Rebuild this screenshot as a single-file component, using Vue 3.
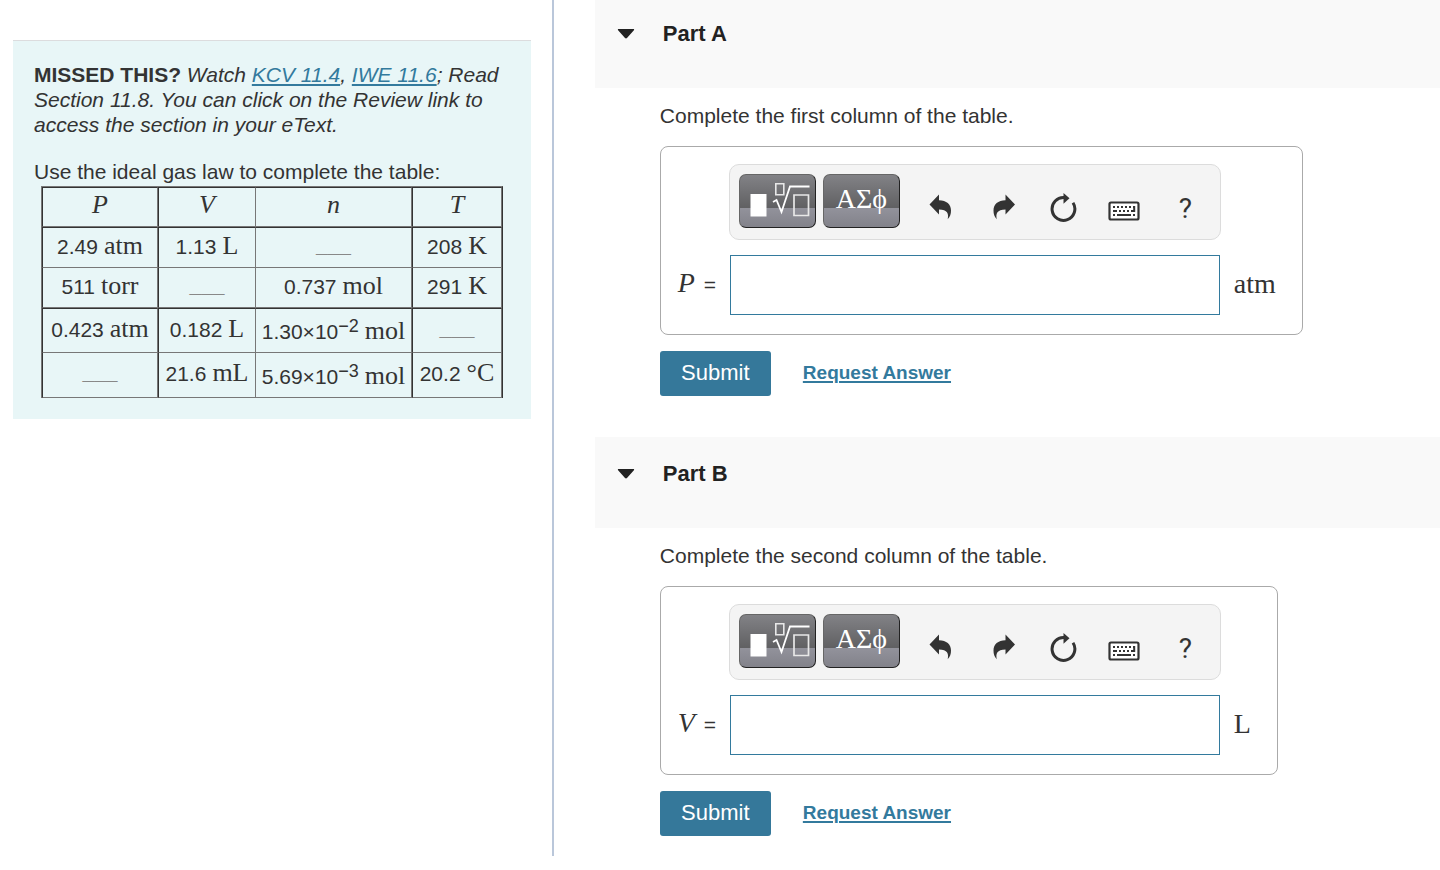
<script setup>
const parts = [
  { id: 'a', title: 'Part A', text: 'Complete the first column of the table.', symbol: 'P', unit: 'atm' },
  { id: 'b', title: 'Part B', text: 'Complete the second column of the table.', symbol: 'V', unit: 'L' },
]

const rows = [
  [{ n: '2.49', u: 'atm' }, { n: '1.13', u: 'L' }, null, { n: '208', u: 'K' }],
  [{ n: '511', u: 'torr' }, null, { n: '0.737', u: 'mol' }, { n: '291', u: 'K' }],
  [{ n: '0.423', u: 'atm' }, { n: '0.182', u: 'L' }, { n: '1.30×10', e: '−2', u: 'mol' }, null],
  [null, { n: '21.6', u: 'mL' }, { n: '5.69×10', e: '−3', u: 'mol' }, { n: '20.2', u: '°C' }],
]
</script>

<template>
  <div class="page">
    <aside class="side">
      <div class="problem">
        <p class="hint">
          <strong>MISSED THIS?</strong> <em>Watch <a href="#">KCV 11.4</a>, <a href="#">IWE 11.6</a>; Read Section 11.8. You can click on the Review link to access the section in your eText.</em>
        </p>
        <p class="task">Use the ideal gas law to complete the table:</p>
        <table class="gas">
          <colgroup>
            <col class="c-p" /><col class="c-v" /><col class="c-n" /><col class="c-t" />
          </colgroup>
          <thead>
            <tr>
              <th v-for="s in ['P', 'V', 'n', 'T']" :key="s" scope="col"><i class="math">{{ s }}</i></th>
            </tr>
          </thead>
          <tbody>
            <tr v-for="(row, r) in rows" :key="r">
              <td v-for="(c, i) in row" :key="i" :class="{ power: c && c.e, blank: !c }">
                <template v-if="c">{{ c.n }}<sup v-if="c.e">{{ c.e }}</sup><span class="math unit-gap">{{ c.u }}</span></template>
                <template v-else>___</template>
              </td>
            </tr>
          </tbody>
        </table>
      </div>
    </aside>

    <main class="main">
      <section v-for="p in parts" :key="p.id" class="part">
        <header class="part-header">
          <button class="toggle" type="button" :aria-label="'Collapse ' + p.title">
            <svg width="18" height="10" viewBox="0 0 18 10"><path d="M1.6 0h14.8c.8 0 1 .7.5 1.200L10 9c-.6.6-1.400.6-2 0L1.100 1.200C.6.7.8 0 1.600 0z" fill="#222" /></svg>
          </button>
          <h2>{{ p.title }}</h2>
        </header>
        <div class="body">
          <p class="instruction">{{ p.text }}</p>
          <div class="answer">
            <div class="toolbar" role="toolbar">
              <button class="palette" type="button" aria-label="Templates">
                <svg width="75" height="52" viewBox="0 0 75 52" fill="none" stroke="#fff">
                  <path d="M10.500 19h16v22.500h-16z" fill="#fff" stroke="none" />
                  <path d="M35.800 8.800h8v11h-8z" stroke-width="1.600" stroke="#e8e8e8" />
                  <path d="M33 27l3.500-2 5 12 8.500-25.500h19.500" stroke-width="1.800" />
                  <path d="M54 20h14.500v20.500H54z" stroke-width="1.700" stroke="#e8e8e8" />
                </svg>
              </button>
              <button class="palette greek" type="button" aria-label="Symbols">ΑΣϕ</button>
              <div class="tools">
                <button class="tool" type="button" aria-label="Undo">
                  <svg width="24" height="30" viewBox="0 0 24 30"><path d="M.5 11.500L10 1.500v5.700C17.500 7.500 22 11 22 17.500c0 3.500-.8 6-3.300 8.800 1.200-6-.2-9.700-8.700-9.900v5.100z" fill="#333" /></svg>
                </button>
                <button class="tool" type="button" aria-label="Redo">
                  <svg width="28" height="30" viewBox="0 0 28 30"><path d="M27 11.500L17.500 1.500v5.700C10 7.500 5.500 11 5.500 17.500c0 3.500.8 6 3.300 8.800-1.200-6 .2-9.700 8.700-9.900v5.100z" fill="#333" /></svg>
                </button>
                <button class="tool" type="button" aria-label="Reset">
                  <svg width="28" height="30" viewBox="0 0 28 30"><path d="M15.500 4.600A11.400 11.400 0 1 0 24 9.700" fill="none" stroke="#333" stroke-width="3" /><path d="M14.500 0L20.500 5.200 14.500 10.800z" fill="#333" /></svg>
                </button>
                <button class="tool" type="button" aria-label="Keyboard shortcuts">
                  <svg class="keys" width="32" height="20" viewBox="0 0 32 20">
                    <rect x="1.500" y="1.500" width="29" height="17" rx="1.500" fill="#fff" stroke="#333" stroke-width="2.200" />
                    <path d="M5 6h2M9 6h2M13 6h2M17 6h2M21 6h2M25 6h2M5 10h4M11 10h2M15 10h2M19 10h2M23 10h4M26.200 5v6M5 14h2M9 14h14M25 14h2" stroke="#333" stroke-width="2" />
                  </svg>
                </button>
                <button class="tool help" type="button" aria-label="Help">?</button>
              </div>
            </div>
            <label class="symbol" :for="'answer-' + p.id"><i class="math">{{ p.symbol }}</i> =</label>
            <input :id="'answer-' + p.id" class="field" type="text" />
            <span class="math unit">{{ p.unit }}</span>
          </div>
          <div class="actions">
            <button class="submit" type="button">Submit</button>
            <a class="request" href="#">Request Answer</a>
          </div>
        </div>
      </section>
    </main>
  </div>
</template>

<style>
body {
  margin: 0;
  background: #fff;
}
</style>

<style scoped>
.page {
  display: grid;
  grid-template-columns: 5fr 8fr;
  font-family: "Liberation Sans", Arial, sans-serif;
  font-size: 21px;
  line-height: 26px;
  color: #333;
}
p, h2 {
  margin: 0;
}
button {
  font-family: inherit;
  cursor: pointer;
}
a {
  color: #337a9d;
  text-decoration-thickness: 2px;
  text-underline-offset: 2px;
}
.math {
  font-family: "Liberation Serif", "Times New Roman", serif;
}
.side {
  border-right: 2px solid #bac7da;
  padding: 40px 21px 0 13px;
}
.problem {
  background: #e8f6f7;
  border-top: 1px solid #dcdcde;
  padding: 21px;
}
.hint {
  line-height: 25px;
  margin-bottom: 22px;
}
.gas {
  margin-left: 7px;
  margin-top: 1px;
  width: 462px;
  table-layout: fixed;
  border-collapse: separate;
  border-spacing: 0;
  border-style: solid;
  border-width: 1px 1px 0;
  border-color: #777 #333 #777 #777;
}
.c-p { width: 116px; }
.c-v { width: 98px; }
.c-n { width: 156px; }
.c-t { width: 90px; }
.gas th,
.gas td {
  box-sizing: border-box;
  height: 40px;
  padding: 0 0 3px;
  border: 0 solid #333;
  border-right: 1px solid #777;
  border-bottom: 1px solid #777;
  text-align: center;
  vertical-align: middle;
  font-weight: 400;
  line-height: 24px;
  white-space: nowrap;
}
.gas th {
  border-top-width: 1px;
}
.gas th:not(:nth-child(3)),
.gas td:not(:nth-child(3)) {
  border-left-width: 1px;
}
.gas tbody tr:nth-child(odd) td {
  border-top-width: 1px;
}
.gas tbody tr:first-child td {
  height: 41px;
}
.gas tbody tr:nth-child(n + 3) td {
  height: 45px;
}
.gas tbody td.power {
  padding: 2px 0 0;
}
.gas tbody td.blank {
  padding-bottom: 6px;
  color: #888;
  font-weight: 700;
}
.gas .math {
  font-size: 26px;
}
.unit-gap {
  margin-left: 6px;
}
sup {
  font-size: 18px;
  line-height: 0;
  vertical-align: 7px;
}
.part-header {
  box-sizing: border-box;
  height: 91px;
  padding: 24px 22px;
  display: flex;
  align-items: flex-start;
  gap: 28px;
  background: #f9f9f9;
}
.part:first-child .part-header {
  height: 88px;
  padding-top: 21px;
}
.toggle {
  display: flex;
  align-items: center;
  height: 26px;
  padding: 0;
  border: 0;
  background: none;
}
h2 {
  font-size: 22px;
  color: #222;
}
.main {
  padding-left: 41px;
}
.body {
  padding: 15px 20px 41px 65px;
}
.part:last-child .body {
  padding-bottom: 20px;
}
.answer {
  box-sizing: border-box;
  width: fit-content;
  margin-top: 17px;
  padding: 17px 26px 19px 17px;
  border: 1px solid #aaa;
  border-radius: 8px;
  display: grid;
  grid-template-columns: 51px auto auto;
  row-gap: 15px;
  align-items: center;
}
.toolbar {
  grid-column: 2;
  box-sizing: border-box;
  width: 492px;
  height: 76px;
  padding: 9px 0 9px 9px;
  display: flex;
  gap: 7px;
  background: #f4f4f4;
  border: 1px solid #dcdcdc;
  border-radius: 10px;
}
.palette {
  box-sizing: border-box;
  flex: none;
  width: 77px;
  height: 54px;
  padding: 0;
  border: 1px solid #666;
  border-right-color: #222;
  border-bottom-color: #222;
  border-radius: 7px;
  background: linear-gradient(#828286, #606062 64%, #92929b 64%, #82828a);
  color: #fff;
}
.palette svg {
  display: block;
}
.palette.greek {
  padding-bottom: 4px;
  font-family: "Liberation Serif", "Times New Roman", serif;
  font-size: 28px;
}
.tools {
  display: flex;
  padding: 4px 0 0 4px;
}
.tool {
  width: 61px;
  height: 60px;
  padding: 0;
  border: 0;
  background: none;
  display: flex;
  align-items: center;
  justify-content: center;
  color: #333;
}
.keys {
  margin-top: 6px;
}
.help {
  font-family: Roboto, sans-serif;
  font-size: 28px;
}
.symbol {
  grid-column: 1;
}
.symbol,
.unit {
  padding-bottom: 2px;
}
.symbol .math,
.unit {
  font-size: 28px;
}
.symbol .math {
  margin-right: 3px;
}
.field {
  box-sizing: border-box;
  width: 490px;
  height: 60px;
  padding: 0 12px;
  border: 1px solid #337a9d;
  border-radius: 0;
  background: #fff;
  font: inherit;
  justify-self: center;
}
.unit {
  margin-left: 13px;
}
.actions {
  margin-top: 16px;
  display: flex;
  align-items: center;
  gap: 32px;
}
.submit {
  width: 111px;
  height: 45px;
  padding: 0 0 2px;
  border: 0;
  border-radius: 3px;
  background: #35789a;
  color: #fff;
  font-size: 22px;
}
.request {
  padding-bottom: 2px;
  font-size: 19px;
  font-weight: 700;
}
</style>
